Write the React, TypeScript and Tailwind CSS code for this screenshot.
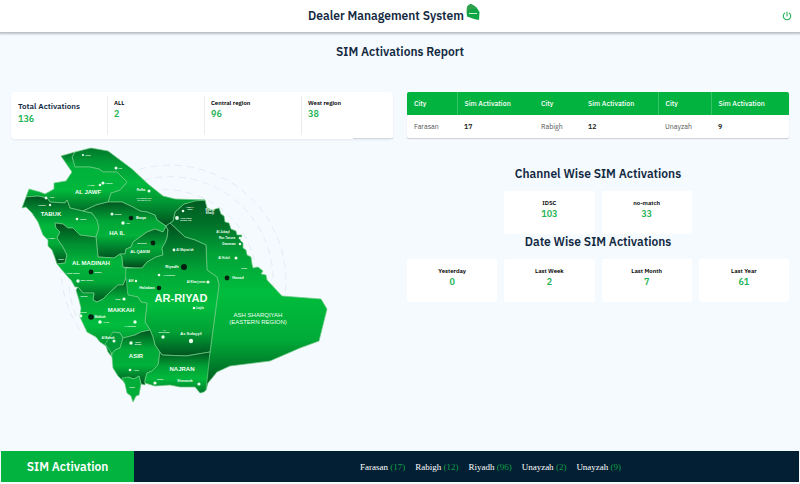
import React from "react";

const regionTotals = [
  { label: "ALL", value: 2 },
  { label: "Central region", value: 96 },
  { label: "West region", value: 38 },
];

const cityTotals = [
  { city: "Farasan", value: 17 },
  { city: "Rabigh", value: 12 },
  { city: "Unayzah", value: 9 },
];

const channelTotals = [
  { label: "IDSC", value: 103 },
  { label: "no-match", value: 33 },
];

const dateTotals = [
  { label: "Yesterday", value: 0 },
  { label: "Last Week", value: 2 },
  { label: "Last Month", value: 7 },
  { label: "Last Year", value: 61 },
];

const ticker = [
  { city: "Farasan", value: 17 },
  { city: "Rabigh", value: 12 },
  { city: "Riyadh", value: 96 },
  { city: "Unayzah", value: 2 },
  { city: "Unayzah", value: 9 },
];

type Region = { name: string; fill: string; points: string };

const regions: Region[] = [
  {
    name: "eastern",
    fill: "url(#east)",
    points:
      "166,226 173,221 175,212 184,204 195,200 205,200 207,208 212,210 219,208 221,214 224,216 225,222 229,223 231,229 236,231 237,235 242,235 240,240 243,243 243,248 246,250 247,255 251,257 252,264 253,268 258,267 263,271 261,274 266,275 267,280 282,296 321,299 327,309 319,341 300,348 270,361 230,366 217,372 208,383 206,390 200,393 210,352 219,285 217,277 207,270 206,245 195,240 185,237 170,223",
  },
  {
    name: "northern-borders",
    fill: "url(#north)",
    points:
      "75,152 91,148 108,151 132,169 148,184 163,196 175,199 205,200 195,201 184,204 175,212 173,221 166,226 157,220 155,215 147,212 140,211 133,207 122,202 108,202 111,193 120,190 127,182 123,178 117,172 103,172 99,169 90,167 75,167 72,157",
  },
  {
    name: "jawf",
    fill: "url(#jawf)",
    points:
      "29,189 40,192 45,194 54,189 54,183 66,181 72,172 61,156 75,152 72,157 75,167 90,167 99,169 103,172 117,172 123,178 127,182 120,190 111,193 108,202 96,205 83,211 70,208 67,200 65,203 50,202 47,198 38,196 26,197",
  },
  {
    name: "tabuk",
    fill: "url(#tabuk)",
    points:
      "22,208 26,197 38,196 47,198 50,202 65,203 67,200 70,208 83,211 92,213 97,220 99,228 96,237 80,235 73,228 68,228 63,224 55,223 56,228 60,232 57,238 63,247 67,255 65,263 57,264 55,258 52,250 48,246 48,240 43,235 38,222 32,213 26,207",
  },
  {
    name: "hail",
    fill: "url(#hail)",
    points:
      "83,211 96,205 108,202 122,202 133,207 140,211 147,212 155,215 157,220 166,226 163,232 155,229 147,232 140,237 133,242 131,247 126,249 125,254 120,254 114,258 98,257 96,237 99,228 97,220 92,213",
  },
  {
    name: "madinah",
    fill: "url(#madinah)",
    points:
      "55,223 63,224 68,228 73,228 80,235 96,237 98,257 114,258 120,254 122,257 123,267 126,268 126,278 123,285 118,285 110,292 103,299 97,302 93,300 94,293 83,293 78,287 75,287 71,280 68,277 62,270 57,264 65,263 67,255 63,247 57,238 60,232 56,228",
  },
  {
    name: "qassim",
    fill: "url(#qassim)",
    points:
      "163,232 166,226 168,230 167,238 165,243 162,248 163,255 156,257 147,262 142,268 135,268 123,267 122,257 120,254 125,254 126,249 131,247 133,242 140,237 147,232 155,229",
  },
  {
    name: "riyadh",
    fill: "url(#riyadh)",
    points:
      "166,226 170,223 185,237 195,240 206,245 207,270 217,277 219,285 210,352 186,356 162,355 155,345 153,337 150,330 145,322 147,303 141,302 138,297 128,295 125,284 126,268 135,268 142,268 147,262 156,257 163,255 162,248 165,243 167,238 168,230",
  },
  {
    name: "makkah",
    fill: "url(#makkah)",
    points:
      "78,287 83,293 94,293 93,300 97,302 103,299 110,292 118,285 123,285 126,278 128,295 138,297 141,302 147,303 145,322 150,330 141,332 135,335 123,338 120,333 113,332 112,342 110,348 112,357 108,352 106,346 100,342 96,337 87,332 80,317 81,308 79,300 76,290",
  },
  {
    name: "baha",
    fill: "#009a38",
    points: "113,332 120,333 123,338 120,348 115,350 112,354 109,349 105,344 109,338",
  },
  {
    name: "asir",
    fill: "url(#asir)",
    points:
      "150,330 153,337 155,345 160,352 158,365 152,371 147,373 145,380 145,385 141,384 139,376 134,379 128,377 126,384 118,376 113,368 112,357 112,354 115,350 120,348 123,338 135,335 141,332",
  },
  {
    name: "jazan",
    fill: "#00ad38",
    points: "122,378 128,377 134,379 139,376 141,384 139,395 136,396 133,402 131,396 127,393 125,384",
  },
  {
    name: "najran",
    fill: "url(#najran)",
    points:
      "162,355 186,356 210,352 206,390 204,392 200,393 195,387 180,387 170,385 155,386 145,383 145,380 147,373 152,371 158,365 160,352",
  },
];

const gradients: { id: string; stops: [string, string][] }[] = [
  { id: "east", stops: [["0%", "#005c22"], ["12%", "#007029"], ["28%", "#00a337"], ["48%", "#00bd3d"], ["72%", "#00ab38"], ["100%", "#004d1c"]] },
  { id: "north", stops: [["0%", "#00762a"], ["18%", "#009a35"], ["45%", "#00b83c"], ["70%", "#009634"], ["100%", "#00511f"]] },
  { id: "jawf", stops: [["0%", "#006b29"], ["22%", "#00b13b"], ["65%", "#00b83c"], ["100%", "#006a26"]] },
  { id: "tabuk", stops: [["0%", "#00531f"], ["22%", "#008b31"], ["45%", "#00b83c"], ["70%", "#00ab38"], ["100%", "#00521f"]] },
  { id: "hail", stops: [["0%", "#005822"], ["35%", "#00a637"], ["60%", "#00b23a"], ["100%", "#005521"]] },
  { id: "madinah", stops: [["0%", "#004a1c"], ["25%", "#008b2f"], ["50%", "#00b53b"], ["75%", "#00a838"], ["100%", "#00531f"]] },
  { id: "qassim", stops: [["0%", "#005821"], ["50%", "#00a738"], ["75%", "#008d30"], ["100%", "#00461a"]] },
  { id: "riyadh", stops: [["0%", "#004e1e"], ["15%", "#00752a"], ["38%", "#00a938"], ["62%", "#00bd3d"], ["82%", "#00a035"], ["100%", "#00531f"]] },
  { id: "makkah", stops: [["0%", "#00531f"], ["25%", "#00aa39"], ["60%", "#00bd3d"], ["100%", "#00782b"]] },
  { id: "asir", stops: [["0%", "#00561f"], ["35%", "#00a938"], ["65%", "#00b13a"], ["100%", "#005320"]] },
  { id: "najran", stops: [["0%", "#00561f"], ["35%", "#00a035"], ["65%", "#00b93c"], ["100%", "#007a2b"]] },
];

type Label = { x: number; y: number; size: number; text: string; plain?: boolean };

const labels: Label[] = [
  { x: 88, y: 194, size: 6, text: "AL JAWF" },
  { x: 51, y: 216, size: 6, text: "TABUK" },
  { x: 117, y: 235, size: 6, text: "HA IL" },
  { x: 140, y: 253, size: 4, text: "AL QASIM" },
  { x: 91, y: 265, size: 6, text: "AL MADINAH" },
  { x: 121, y: 312, size: 6, text: "MAKKAH" },
  { x: 136, y: 358, size: 6, text: "ASIR" },
  { x: 182, y: 371, size: 6, text: "NAJRAN" },
  { x: 181, y: 302, size: 11, text: "AR-RIYAD" },
  { x: 258, y: 317, size: 6, text: "ASH SHARQIYAH", plain: true },
  { x: 258, y: 324, size: 6, text: "(EASTERN REGION)", plain: true },
  { x: 141, y: 219, size: 4, text: "Baqa" },
  { x: 172, y: 268, size: 4, text: "Riyadh" },
  { x: 147, y: 289, size: 4, text: "Halaban" },
  { x: 238, y: 279, size: 4, text: "Harad" },
  { x: 191, y: 335, size: 4, text: "As Sulayyil" },
  { x: 88, y: 156, size: 2, text: "Turaif" },
  { x: 120, y: 169, size: 2, text: "Arar" },
  { x: 91, y: 186, size: 2, text: "Al Jawf" },
  { x: 109, y: 184, size: 2, text: "Sakaka" },
  { x: 141, y: 191, size: 3, text: "Rafha" },
  { x: 144, y: 199, size: 2, text: "AL HUDUD ASH" },
  { x: 144, y: 201, size: 2, text: "SHAMALIYAH" },
  { x: 52, y: 198, size: 2, text: "Haql" },
  { x: 42, y: 206, size: 2, text: "Sharma" },
  { x: 83, y: 220, size: 2, text: "Tayma" },
  { x: 118, y: 215, size: 2, text: "Jubbah" },
  { x: 128, y: 224, size: 2, text: "Hail" },
  { x: 142, y: 244, size: 2, text: "Buraydah" },
  { x: 98, y: 273, size: 2, text: "Madina" },
  { x: 87, y: 281, size: 2, text: "Badr Hunayn" },
  { x: 73, y: 274, size: 2, text: "Yanbu al Bahr" },
  { x: 61, y: 260, size: 2, text: "Umluj" },
  { x: 51, y: 239, size: 2, text: "Al Wajh" },
  { x: 84, y: 297, size: 2, text: "Rabigh" },
  { x: 100, y: 318, size: 3, text: "Makkah" },
  { x: 106, y: 323, size: 2, text: "At Taif" },
  { x: 83, y: 313, size: 2, text: "Jeddah" },
  { x: 130, y: 327, size: 2, text: "Al Khurmah" },
  { x: 118, y: 300, size: 2, text: "Zalim" },
  { x: 108, y: 339, size: 3, text: "Al Bahah" },
  { x: 138, y: 343, size: 2, text: "Qal'at" },
  { x: 138, y: 345, size: 2, text: "Bishah" },
  { x: 136, y: 371, size: 2, text: "Abha" },
  { x: 132, y: 388, size: 2, text: "Jazan" },
  { x: 131, y: 282, size: 3, text: "Afif" },
  { x: 164, y: 331, size: 2, text: "As" },
  { x: 164, y: 333, size: 2, text: "Sulayyimah" },
  { x: 160, y: 380, size: 2, text: "Najran" },
  { x: 185, y: 382, size: 3, text: "Sharawrah" },
  { x: 200, y: 309, size: 3, text: "Layla" },
  { x: 196, y: 283, size: 3, text: "Al Kharj area" },
  { x: 169, y: 276, size: 2, text: "Al Duwadimi" },
  { x: 185, y: 251, size: 3, text: "Al Majma'ah" },
  { x: 190, y: 208, size: 2, text: "Hafar Al" },
  { x: 190, y: 210, size: 2, text: "Batin" },
  { x: 186, y: 219, size: 2, text: "King Khalid" },
  { x: 186, y: 221, size: 2, text: "Military City" },
  { x: 210, y: 211, size: 3, text: "Ras al" },
  { x: 210, y: 214, size: 3, text: "Khafji" },
  { x: 223, y: 233, size: 3, text: "Al Jubayl" },
  { x: 227, y: 239, size: 3, text: "Ras Tanura" },
  { x: 229, y: 245, size: 3, text: "Dammam" },
  { x: 224, y: 259, size: 3, text: "Al Hufuf" },
  { x: 244, y: 269, size: 2, text: "Salwa" },
];

const capitals: [number, number, number][] = [
  [131, 218, 2.3],
  [153, 243, 2.4],
  [91, 272, 2.4],
  [91, 317, 2.8],
  [184, 267, 3],
  [159, 288, 2.3],
  [227, 278, 2.4],
];

const towns: [number, number, number][] = [
  [83, 155, 1.1], [116, 168, 1.5], [103, 183, 1.6], [100, 185, 1.3], [149, 191, 1.5],
  [46, 198, 1.4], [50, 205, 1.2], [77, 219, 1.3], [112, 214, 1.5], [123, 223, 1.7],
  [78, 281, 1.7], [136, 281, 1.2], [124, 299, 1.6], [81, 316, 1.4], [100, 322, 1.8],
  [135, 322, 1.7], [114, 341, 1.5], [131, 343, 1.7], [130, 370, 1.3], [163, 337, 1.7],
  [155, 383, 1.6], [199, 384, 1.6], [191, 341, 2.2], [194, 308, 1.3], [208, 282, 1.6],
  [159, 275, 1.3], [174, 250, 1.4], [183, 211, 1.3], [177, 218, 1.9], [240, 238, 1.3],
  [240, 244, 1.3], [236, 258, 1.5],
];

function SaudiMap() {
  return (
    <svg viewBox="11 139 382 270" className="block w-full" role="img" aria-label="Map of activations by region">
      <defs>
        {gradients.map((g) => (
          <linearGradient key={g.id} id={g.id} x1="0" y1="0" x2="0" y2="1">
            {g.stops.map(([offset, color]) => (
              <stop key={offset} offset={offset} stopColor={color} />
            ))}
          </linearGradient>
        ))}
      </defs>
      <g fill="none" stroke="#dbe4eb" strokeWidth="0.7" strokeDasharray="7 5">
        <path d="M128 173 A116 116 0 0 1 284 302" />
        <path d="M132 184 A103 103 0 0 1 271 300" />
        <path d="M150 191 A91 91 0 0 1 254 260" />
        <path d="M62 254 A110 110 0 0 0 80 330" />
        <path d="M70 262 A101 101 0 0 0 78 320" />
      </g>
      <g stroke="#6fca83" strokeWidth="0.7" strokeLinejoin="round">
        {regions.map((r) => (
          <polygon key={r.name} points={r.points} fill={r.fill} />
        ))}
      </g>
      <g fill="#04210f">
        {capitals.map(([x, y, r]) => (
          <circle key={`${x}-${y}`} cx={x} cy={y} r={r} />
        ))}
      </g>
      <g fill="#e6ffe9">
        {towns.map(([x, y, r]) => (
          <circle key={`${x}-${y}`} cx={x} cy={y} r={r} />
        ))}
      </g>
      <g fill="#f1fff3" textAnchor="middle" fontFamily="'Liberation Sans', Arial, sans-serif">
        {labels.map((l) => (
          <text key={`${l.x}-${l.y}`} x={l.x} y={l.y} fontSize={l.size} fontWeight={l.plain ? 400 : 700}>
            {l.text}
          </text>
        ))}
      </g>
    </svg>
  );
}

function StatCard({ label, value }: { label: string; value: number }) {
  return (
    <div className="h-[43px] rounded-xs bg-white pt-2 text-center">
      <p className="text-[6px] leading-[8px] font-semibold text-black">{label}</p>
      <p className="mt-px text-[9px] leading-[12px] font-semibold text-[#1fb455]">{value}</p>
    </div>
  );
}

export default function App() {
  return (
    <div className="flex min-h-screen flex-col bg-[#f5faff] font-['IBM_Plex_Sans','Roboto',sans-serif] text-[#12293f]">
      <header className="flex h-8 items-center bg-white px-2 shadow-[0_1px_2px_1px_#b9bec4]">
        <div className="flex-1" />
        <h1 className="flex items-center gap-[2px] pr-3 text-[12px] leading-[18px] font-semibold">
          Dealer Management System
          <svg viewBox="0 0 14 18" className="mb-2 h-[18px] w-[14px]" aria-hidden="true">
            <path d="M1 4Q2.500 1.500 5 1Q11 3.500 13.500 9L13 17Q7 16 1 13.500Q0 8 1 4Z" fill="#0fa544" />
            <path d="M1 4Q2.500 1.500 5 1Q9 3 11 5.500Q5 5 1 9Z" fill="#2f9f4b" />
            <path d="M3 10.500h8" stroke="#c8f0d0" strokeWidth="1" />
          </svg>
        </h1>
        <div className="flex flex-1 justify-end">
          <button type="button" aria-label="Log out" className="text-[#2bb35a]">
            <svg viewBox="0 0 10 10" className="size-[10px]" fill="none" stroke="currentColor" strokeWidth="1.1" strokeLinecap="round">
              <path d="M5 1V5M2.700 2.100A3.700 3.700 0 1 0 7.300 2.100" />
            </svg>
          </button>
        </div>
      </header>

      <main className="px-[11px]">
        <h2 className="mt-[11px] text-center text-[12px] leading-[18px] font-semibold">SIM Activations Report</h2>

        <div className="mt-[31px] grid grid-cols-2 gap-[14px]">
          <section>
            <div className="relative grid h-[47px] grid-cols-[96fr_97fr_97fr_92fr] rounded-sm bg-white py-1 shadow-[0_1px_2px_#e3e9ee] after:absolute after:right-0 after:bottom-0 after:h-px after:w-10 after:bg-[#d3d8dc]">
              <div className="pt-1 pl-[7px]">
                <p className="text-[8px] leading-[12px] font-semibold">Total Activations</p>
                <p className="mt-px text-[9px] leading-[12px] font-semibold text-[#1fb455]">136</p>
              </div>
              {regionTotals.map((r) => (
                <div key={r.label} className="border-l border-[#e9edf0] pt-[3px] pl-[6px]">
                  <p className="text-[6px] leading-[8px] font-semibold text-black">{r.label}</p>
                  <p className="mt-px text-[9px] leading-[12px] font-semibold text-[#1fb455]">{r.value}</p>
                </div>
              ))}
            </div>
            <SaudiMap />
          </section>

          <section>
            <table className="w-full table-fixed overflow-hidden rounded-xs bg-white text-left text-[7px] leading-[9px] shadow-[0_1px_1px_#c9ced2]">
              <colgroup>
                <col className="w-[50px]" />
                <col className="w-[77px]" />
                <col className="w-[47px]" />
                <col className="w-[77px]" />
                <col className="w-[53px]" />
                <col className="w-[78px]" />
              </colgroup>
              <thead>
                <tr className="h-[23px] bg-[#03b340] text-white">
                  {cityTotals.map((c, i) => (
                    <React.Fragment key={c.city}>
                      <th scope="col" className={i === 1 ? "pl-[7px] font-medium" : "border-r border-[#35c267] pl-[7px] font-medium"}>
                        City
                      </th>
                      <th scope="col" className={i === 1 ? "border-r border-[#35c267] pl-[7px] font-medium" : "pl-[7px] font-medium"}>
                        Sim Activation
                      </th>
                    </React.Fragment>
                  ))}
                </tr>
              </thead>
              <tbody>
                <tr className="h-[23px]">
                  {cityTotals.map((c) => (
                    <React.Fragment key={c.city}>
                      <td className="pl-[7px] text-[#555]">{c.city}</td>
                      <td className="pl-[7px] font-semibold text-[#222]">{c.value}</td>
                    </React.Fragment>
                  ))}
                </tr>
              </tbody>
            </table>

            <h2 className="mt-[27px] text-center text-[12px] leading-[18px] font-semibold">Channel Wise SIM Activations</h2>
            <div className="mt-[8px] grid grid-cols-4 gap-[7px]">
              <div />
              {channelTotals.map((c) => (
                <StatCard key={c.label} label={c.label} value={c.value} />
              ))}
            </div>
            <h2 className="-mt-px text-center text-[12px] leading-[18px] font-semibold">Date Wise SIM Activations</h2>
            <div className="mt-[8px] grid grid-cols-4 gap-[7px]">
              {dateTotals.map((d) => (
                <StatCard key={d.label} label={d.label} value={d.value} />
              ))}
            </div>
          </section>
        </div>
      </main>

      <footer className="mx-px mt-auto mb-[2px] flex h-[31px] bg-[#021f33]">
        <div className="flex w-[133px] items-center justify-center bg-[#03b340] text-[12px] leading-[18px] font-semibold text-white">
          SIM Activation
        </div>
        <ul className="flex flex-1 items-center justify-center gap-2.5 pl-12 font-['Liberation_Serif',serif] text-[9px] leading-[12px] text-white">
          {ticker.map((t, i) => (
            <li key={i}>
              {t.city} <span className="text-[#0f9f46]">({t.value})</span>
            </li>
          ))}
        </ul>
      </footer>
    </div>
  );
}
